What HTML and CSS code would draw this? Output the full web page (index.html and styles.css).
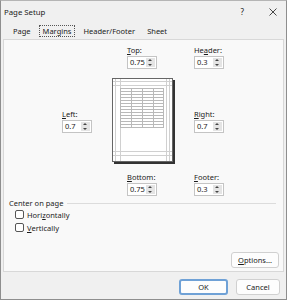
FILE: index.html
```
<!DOCTYPE html>
<html lang="en">
<head>
    <meta charset="UTF-8">
    <title>Page Setup</title>
    <link rel="stylesheet" href="styles.css">
</head>
<body>
    <div class="dialog">
        <!-- Title bar -->
        <div class="titlebar">
            <span class="title">Page Setup</span>
            <span class="help">?</span>
            <svg class="close" width="8" height="8" viewBox="0 0 8 8">
                <path d="M0.5 0.5L7.5 7.5M7.5 0.5L0.5 7.5" stroke="#333" stroke-width="0.9" fill="none"/>
            </svg>
        </div>

        <!-- Tabs -->
        <div class="tabs">
            <span class="tab">Page</span>
            <span class="tab active">Margins</span>
            <span class="tab">Header/Footer</span>
            <span class="tab">Sheet</span>
        </div>

        <div class="panel">
            <div class="margins">
                <div class="field f-top">
                    <label><u>T</u>op:</label>
                    <div class="spin"><span class="val">0.75</span><span class="arrows"></span></div>
                </div>
                <div class="field f-header">
                    <label>He<u>a</u>der:</label>
                    <div class="spin"><span class="val">0.3</span><span class="arrows"></span></div>
                </div>
                <div class="field f-left">
                    <label><u>L</u>eft:</label>
                    <div class="spin"><span class="val">0.7</span><span class="arrows"></span></div>
                </div>

                <svg class="preview" width="63" height="86" viewBox="0 0 63 86">
                    <rect x="0.5" y="0.5" width="60" height="83" fill="#fff" stroke="#666"/>
                    <rect x="61" y="2" width="2" height="84" fill="#333"/>
                    <rect x="2" y="84" width="61" height="2" fill="#333"/>
                    <path d="M3.5 1V83M8.5 1V83M54.5 1V83M57.5 1V83M1 3.5H60M1 7.5H60M1 73.5H60M1 77.5H60" stroke="#d0d0d0" stroke-width="1" fill="none"/>
                    <path d="M8.5 10V50M19.5 10V50M30.5 10V50M41.5 10V50M51.5 10V50
                             M8 10.5H52M8 13.5H52M8 16.5H52M8 19.5H52M8 22.5H52M8 25.5H52M8 28.5H52
                             M8 31.5H52M8 34.5H52M8 37.5H52M8 40.5H52M8 43.5H52M8 46.5H52M8 49.5H52" stroke="#b9b9b9" stroke-width="1" fill="none"/>
                </svg>

                <div class="field f-right">
                    <label><u>R</u>ight:</label>
                    <div class="spin"><span class="val">0.7</span><span class="arrows"></span></div>
                </div>
                <div class="field f-bottom">
                    <label><u>B</u>ottom:</label>
                    <div class="spin"><span class="val">0.75</span><span class="arrows"></span></div>
                </div>
                <div class="field f-footer">
                    <label><u>F</u>ooter:</label>
                    <div class="spin"><span class="val">0.3</span><span class="arrows"></span></div>
                </div>
            </div>

            <!-- Center on page -->
            <div class="group">
                <div class="group-title">Center on page</div>
                <div class="check"><span class="box"></span>Hori<u>z</u>ontally</div>
                <div class="check"><span class="box"></span><u>V</u>ertically</div>
            </div>

            <div class="panel-actions">
                <button class="btn options"><u>O</u>ptions...</button>
            </div>
        </div>

        <div class="footer">
            <button class="btn ok">OK</button>
            <button class="btn cancel">Cancel</button>
        </div>
    </div>
</body>
</html>
```

FILE: styles.css
```
* {
    margin: 0;
    padding: 0;
    box-sizing: border-box;
}

body {
    font-family: "Noto Sans", sans-serif;
    font-size: 7.5px;
    color: #1b1b1b;
    background-color: #f0f0f0;
}

.dialog {
    width: 287px;
    height: 300px;
    border: 1px solid #8e8e8e;
    border-top-color: #b5b5b5;
    background-color: #f0f0f0;
    display: flex;
    flex-direction: column;
}

/* Title bar */
.titlebar {
    height: 21px;
    display: flex;
    align-items: center;
    padding-left: 3px;
}

.title {
    flex: 1;
    font-size: 7.8px;
}

.help {
    margin-right: 25px;
    font-size: 8px;
}

.close {
    margin-right: 9px;
}

/* Tabs */
.tabs {
    height: 17px;
    display: flex;
    align-items: center;
    padding-left: 8px;
    gap: 4px;
}

.tab {
    line-height: 10px;
    padding: 0 3px;
    border: 1px solid transparent;
}

.tab.active {
    border: 1px dotted #555;
}

/* Tab panel */
.panel {
    margin: 0 2px;
    height: 233px;
    border: 1px solid #d8d8d8;
    background-color: #f9f9f9;
    display: flex;
    flex-direction: column;
}

.margins {
    display: grid;
    grid-template-columns: 50px 82px auto;
    row-gap: 9px;
    margin-left: 58px;
    padding-top: 6px;
}

.field {
    display: flex;
    flex-direction: column;
}

.field label {
    line-height: 9px;
    margin-bottom: 1px;
}

.f-top { grid-column: 2; grid-row: 1; margin-left: 15px; }
.f-header { grid-column: 3; grid-row: 1; }
.f-left { grid-column: 1; grid-row: 2; align-self: center; }
.preview { grid-column: 2; grid-row: 2; display: block; }
.f-right { grid-column: 3; grid-row: 2; align-self: center; }
.f-bottom { grid-column: 2; grid-row: 3; margin-left: 15px; }
.f-footer { grid-column: 3; grid-row: 3; }

/* Spin box */
.spin {
    width: 30px;
    height: 13px;
    display: flex;
    border: 1px solid #c4c4c4;
    background-color: #fff;
}

.spin .val {
    flex: 1;
    line-height: 11px;
    padding-left: 2px;
}

.spin .arrows {
    width: 9px;
    margin: 1px;
    background-color: #e4e4e4;
    position: relative;
}

.spin .arrows::before,
.spin .arrows::after {
    content: "";
    position: absolute;
    left: 2px;
    border-left: 2px solid transparent;
    border-right: 2px solid transparent;
}

.spin .arrows::before {
    top: 1px;
    border-bottom: 2.5px solid #444;
}

.spin .arrows::after {
    bottom: 1px;
    border-top: 2.5px solid #444;
}

/* Center on page */
.group {
    margin-top: 3px;
    padding-left: 5px;
}

.group-title {
    display: flex;
    align-items: center;
    line-height: 9px;
    margin-right: 7px;
}

.group-title::after {
    content: "";
    flex: 1;
    border-top: 1px solid #dcdcdc;
    margin-left: 4px;
}

.check {
    display: flex;
    align-items: center;
    height: 13px;
    padding-left: 6px;
}

.check .box {
    width: 9px;
    height: 9px;
    border: 1px solid #555;
    border-radius: 2px;
    background-color: #fff;
    margin-right: 3px;
}

/* Buttons */
.btn {
    font-family: "Noto Sans", sans-serif;
    font-size: 7.5px;
    color: #1b1b1b;
    background-color: #fdfdfd;
    border: 1px solid #d0d0d0;
    border-radius: 3px;
}

.panel-actions {
    margin-top: auto;
    display: flex;
    justify-content: flex-end;
    padding: 0 4px 3px 0;
}

.options {
    width: 48px;
    height: 16px;
}

.footer {
    flex: 1;
    display: flex;
    justify-content: flex-end;
    align-items: center;
    gap: 8px;
    padding: 3px 6px 0 0;
}

.ok {
    width: 49px;
    height: 16px;
    border: 2px solid #6fa1d6;
}

.cancel {
    width: 44px;
    height: 16px;
}
```
